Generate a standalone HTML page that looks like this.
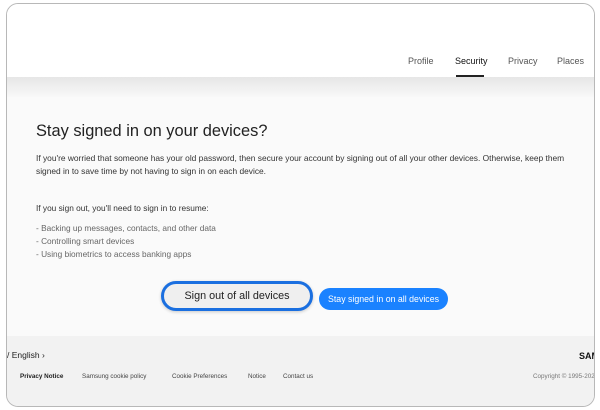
<!DOCTYPE html>
<html><head><style>
*{margin:0;padding:0;box-sizing:border-box}
body{width:600px;height:410px;background:#fff;font-family:"Liberation Sans",sans-serif;position:relative;overflow:hidden}
.frame{position:absolute;left:6px;top:3px;width:589px;height:404px;border:1px solid #b8b8b8;border-radius:12px;overflow:hidden;background:#fafafa}
.hdr{position:absolute;left:0;top:0;width:100%;height:73px;background:#fff}
.band{position:absolute;left:0;top:73px;width:100%;height:20px;background:linear-gradient(#e6e6e6,#f8f8f8)}
.nav{position:absolute;top:52px;font-size:9px;color:#555}
.t{position:absolute;color:#222}
.foot{position:absolute;left:0;top:332px;width:100%;height:72px;background:#f2f2f2}
.f{position:absolute;font-size:6.3px;color:#444;top:369px}
</style></head><body>
<div class="frame">
<div class="hdr"></div>
<div class="band"></div>
<div class="nav" style="left:401px">Profile</div>
<div class="nav" style="left:448px;color:#111">Security</div>
<div style="position:absolute;left:449px;top:71px;width:28px;height:1.5px;background:#222"></div>
<div class="nav" style="left:501px">Privacy</div>
<div class="nav" style="left:550px">Places</div>
<div class="t" style="left:29px;top:118px;font-size:16.4px;color:#222">Stay signed in on your devices?</div>
<div class="t" style="left:29px;top:148px;font-size:8.4px;line-height:13px;color:#333;width:545px">If you're worried that someone has your old password, then secure your account by signing out of all your other devices. Otherwise, keep them signed in to save time by not having to sign in on each device.</div>
<div class="t" style="left:29px;top:199px;font-size:8.3px;color:#333">If you sign out, you'll need to sign in to resume:</div>
<div class="t" style="left:29px;top:218px;font-size:8.3px;line-height:13px;color:#666">- Backing up messages, contacts, and other data<br>- Controlling smart devices<br>- Using biometrics to access banking apps</div>
<div style="position:absolute;left:154px;top:277px;width:152px;height:30px;border:3px solid #1a6fe0;border-radius:15px;background:#efefef;box-shadow:0 1px 3px rgba(0,0,0,.2);text-align:center;font-size:10.8px;line-height:24px;color:#222">Sign out of all devices</div>
<div style="position:absolute;left:312px;top:284px;width:129px;height:22px;border-radius:11px;background:#1a82ff;color:#fff;text-align:center;font-size:8.8px;line-height:22px">Stay signed in on all devices</div>
<div class="foot"></div>
<div class="t" style="left:0;top:346px;font-size:8.5px;color:#222">/ English &#8250;</div>
<div class="t" style="left:572px;top:347px;font-size:9px;font-weight:bold;color:#111">SAMSUNG</div>
<div class="f" style="left:13px;font-weight:bold;color:#222">Privacy Notice</div>
<div class="f" style="left:75px">Samsung cookie policy</div>
<div class="f" style="left:165px">Cookie Preferences</div>
<div class="f" style="left:241px">Notice</div>
<div class="f" style="left:276px">Contact us</div>
<div class="f" style="left:526px;color:#777;white-space:nowrap">Copyright © 1995-2024</div>
</div>
</body></html>
